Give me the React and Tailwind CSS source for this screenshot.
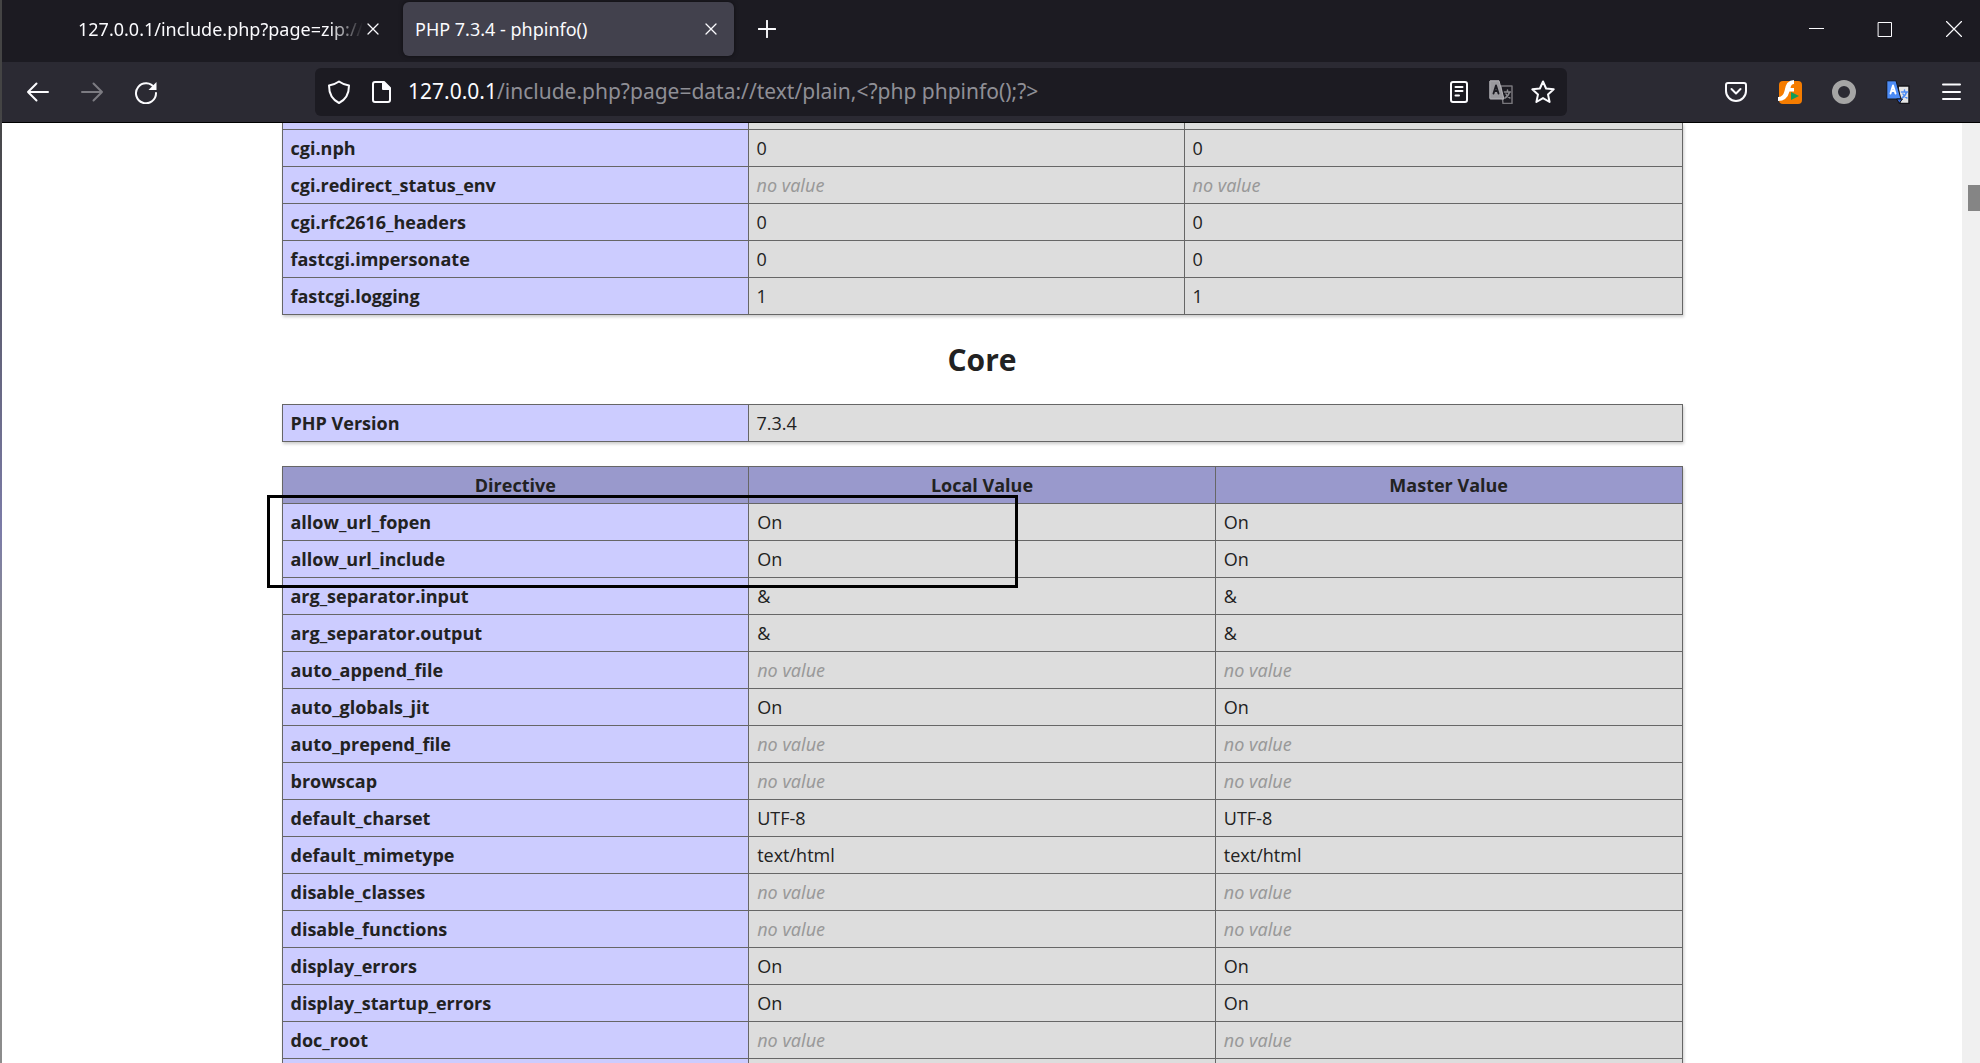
import clsx from "clsx";

const cgiRows = [
  ["cgi.nph", "0"],
  ["cgi.redirect_status_env", null],
  ["cgi.rfc2616_headers", "0"],
  ["fastcgi.impersonate", "0"],
  ["fastcgi.logging", "1"],
];

const coreRows = [
  ["allow_url_fopen", "On"],
  ["allow_url_include", "On"],
  ["arg_separator.input", "&"],
  ["arg_separator.output", "&"],
  ["auto_append_file", null],
  ["auto_globals_jit", "On"],
  ["auto_prepend_file", null],
  ["browscap", null],
  ["default_charset", "UTF-8"],
  ["default_mimetype", "text/html"],
  ["disable_classes", null],
  ["disable_functions", null],
  ["display_errors", "On"],
  ["display_startup_errors", "On"],
  ["doc_root", null],
];

const tableClass =
  "w-full table-fixed border-collapse text-lg leading-7 shadow-[1px_2px_3px_#ccc]";
const cell = "h-[37px] border border-[#666] px-2 align-middle";
const keyCell = "bg-[#ccccff] text-left font-bold";

function Icon({ className = "size-6", children, ...props }) {
  return (
    <svg
      viewBox="0 0 24 24"
      fill="none"
      stroke="currentColor"
      strokeWidth="2"
      strokeLinecap="round"
      strokeLinejoin="round"
      className={clsx("shrink-0", className)}
      aria-hidden="true"
      {...props}
    >
      {children}
    </svg>
  );
}

function CloseIcon() {
  return (
    <Icon className="size-3" strokeWidth="2.500">
      <path d="M2 2 22 22M22 2 2 22" />
    </Icon>
  );
}

function TranslateIcon({ muted }) {
  const front = muted ? "#9a999e" : "#4c8bf5";
  const letter = muted ? "#1c1b22" : "#fff";
  const page = muted ? "none" : "#e4e4e4";
  const line = muted ? "#8b8a8f" : "#4c8bf5";
  return (
    <Icon strokeWidth="1.500">
      <path d="M12 6h11v17.500H14z" fill={page} stroke={muted ? "#77767b" : "#15141a"} />
      <path d="M15.500 12h6M18.500 10v2M20.500 12q-1 4-4.500 6M17 14q1.500 3 4 4" stroke={line} />
      <path
        d="M1.500.800H10L15 19H1.500Q.800 19 .800 18V1.500Z"
        fill={front}
        stroke={muted ? "#b5b4b9" : "#15141a"}
        strokeWidth="1"
      />
      {!muted && (
        <path d="M11 19h5.500L13.500 23z" fill="#3367d6" stroke="#15141a" strokeWidth="1" />
      )}
      <path d="M4.500 13.500 7 5.500l2.500 8M5.300 11h3.400" stroke={letter} strokeWidth="1.900" />
    </Icon>
  );
}

function DirectiveRow({ name, value }) {
  const shown =
    value === null ? <i className="font-['Noto_Sans'] text-[#999]">no value</i> : value;

  return (
    <tr>
      <th scope="row" className={clsx(cell, keyCell)}>
        {name}
      </th>
      <td className={clsx(cell, "bg-[#ddd]")}>{shown}</td>
      <td className={clsx(cell, "bg-[#ddd]")}>{shown}</td>
    </tr>
  );
}

function TabStrip() {
  return (
    <div className="flex h-[62px] items-start bg-[#1c1b22] pt-0.5 text-lg">
      <div className="flex h-[54px] w-[401px] items-center pl-[76px] pr-6">
        <span className="min-w-0 flex-1 overflow-hidden whitespace-nowrap [mask-image:linear-gradient(to_right,#000_88%,transparent)]">
          127.0.0.1/include.php?page=zip://
        </span>
        <button aria-label="Close tab" className="ml-1">
          <CloseIcon />
        </button>
      </div>
      <div className="flex h-[54px] w-[331px] items-center justify-between rounded-md bg-[#42414d] pl-3 pr-[17px] shadow-[0_0_4px_rgba(0,0,0,0.5)]">
        <span>PHP 7.3.4 - phpinfo()</span>
        <button aria-label="Close tab">
          <CloseIcon />
        </button>
      </div>
      <button aria-label="New tab" className="ml-6 flex h-[54px] items-center">
        <Icon className="size-[18px]" strokeWidth="2.500">
          <path d="M12 1v22M1 12h22" />
        </Icon>
      </button>
      <div className="ml-auto flex h-[54px] items-center gap-[53px] pr-[18px]">
        <button aria-label="Minimize">
          <Icon className="size-4" viewBox="0 0 16 16" strokeWidth="1" strokeLinecap="butt">
            <path d="M1 7.500h15" />
          </Icon>
        </button>
        <button aria-label="Maximize">
          <Icon className="size-4" viewBox="0 0 16 16" strokeWidth="1">
            <rect x="1.500" y="1.500" width="13" height="14" />
          </Icon>
        </button>
        <button aria-label="Close window">
          <Icon className="size-4" viewBox="0 0 16 16" strokeWidth="1.200">
            <path d="m.5.500 15 15m0-15-15 15" />
          </Icon>
        </button>
      </div>
    </div>
  );
}

function NavBar() {
  return (
    <div className="flex h-[61px] items-center border-b border-black bg-[#2b2a33] pl-6 pr-4">
      <div className="flex items-center gap-[30px]">
        <button aria-label="Back">
          <Icon>
            <path d="M22 12H2M10.500 3.500 2 12l8.500 8.500" />
          </Icon>
        </button>
        <button aria-label="Forward" disabled className="text-[#7c7b82]">
          <Icon>
            <path d="M2 12h20M13.500 3.500 22 12l-8.500 8.500" />
          </Icon>
        </button>
        <button aria-label="Reload">
          <Icon>
            <path d="M20.500 8A10 10 0 1 0 22 13" />
            <path d="M22.500 2v8h-8z" fill="currentColor" stroke="none" />
          </Icon>
        </button>
      </div>

      <div className="ml-[157px] flex h-12 flex-1 items-center rounded-md bg-[#1c1b22] pl-3 pr-3">
        <Icon>
          <path d="M12 1.500c3 2.200 6 3.300 10 4 0 8-3 14-10 17.500C5 19.500 2 13.500 2 5.500c4-.7 7-1.800 10-4z" />
        </Icon>
        <Icon className="ml-[18px] size-6">
          <path d="M6 2h9l6 6v12q0 2-2 2H6q-2 0-2-2V4q0-2 2-2z" />
          <path d="M14 2v7h7z" fill="currentColor" />
        </Icon>
        <div className="ml-[15px] flex-1 whitespace-nowrap text-[21px] text-[#8f8f96]">
          <span className="text-[#fbfbfe]">127.0.0.1</span>
          /include.php?page=data://text/plain,&lt;?php phpinfo();?&gt;
        </div>
        <div className="flex items-center gap-[18px]">
          <button aria-label="Reader view">
            <Icon>
              <rect x="4" y="2" width="16" height="20" rx="2" />
              <path d="M8.500 7h7M8.500 11h7M8.500 15.500h3.500" />
            </Icon>
          </button>
          <button aria-label="Translate page">
            <TranslateIcon muted />
          </button>
          <button aria-label="Bookmark">
            <Icon>
              <path d="m12 1.500 3.100 7 7.600.8-5.700 5.100 1.600 7.600-6.600-3.900L5.400 22 7 14.400 1.300 9.300l7.600-.8z" />
            </Icon>
          </button>
        </div>
      </div>

      <div className="ml-[157px] flex items-center gap-[30px]">
        <button aria-label="Save to Pocket">
          <Icon>
            <path d="M4 3h16q2 0 2 2v6a10 10 0 0 1-20 0V5q0-2 2-2z" />
            <path d="m7.500 9 4.500 4.500L16.500 9" />
          </Icon>
        </button>
        <button aria-label="Flash player">
          <Icon stroke="none">
            <rect x="1" y="1" width="23" height="23" rx="4" fill="#f57c00" />
            <path
              d="M16 0v4q-3 0-3.500 4H16v3.500h-4.500Q9 21 0 21v-4q5 0 6.500-6Q8 0 16 0z"
              fill="#fff"
            />
            <path d="m13 12 8 4-8 4z" fill="#0f9d58" />
          </Icon>
        </button>
        <button aria-label="Proxy">
          <Icon stroke="#a5a5a5" strokeWidth="6">
            <circle cx="12" cy="12" r="9" />
          </Icon>
        </button>
        <button aria-label="Translate">
          <TranslateIcon />
        </button>
        <button aria-label="Application menu">
          <Icon>
            <path d="M3 4.500h17M3 12h17M3 19h17" />
          </Icon>
        </button>
      </div>
    </div>
  );
}

export default function App() {
  return (
    <div className="flex h-screen overflow-hidden bg-white font-['Open_Sans','Noto_Sans',sans-serif]">
      <div className="w-0.5 shrink-0 bg-linear-to-b from-[#444] from-10% via-[#7c7ca8] via-50% to-[#8c8c8c] to-60%" />
      <div className="flex min-w-0 flex-1 flex-col">
        <header className="shrink-0 font-['Noto_Sans',sans-serif] text-[#fbfbfe]">
          <TabStrip />
          <NavBar />
        </header>

        <div className="flex min-h-0 flex-1">
          <main className="flex-1 overflow-hidden text-[#222]">
            <div className="mx-auto w-[1401px]">
              <table className={tableClass}>
                <colgroup>
                  <col className="w-[466px]" />
                  <col className="w-[436px]" />
                  <col />
                </colgroup>
                <tbody>
                  <tr>
                    <td className="h-[6px] border border-t-0 border-[#666] bg-[#ccccff]" />
                    <td className="h-[6px] border border-t-0 border-[#666] bg-[#ddd]" />
                    <td className="h-[6px] border border-t-0 border-[#666] bg-[#ddd]" />
                  </tr>
                  {cgiRows.map(([name, value]) => (
                    <DirectiveRow key={name} name={name} value={value} />
                  ))}
                </tbody>
              </table>

              <h2 className="my-6 text-center text-3xl leading-[41px] font-bold">Core</h2>

              <table className={tableClass}>
                <colgroup>
                  <col className="w-[466px]" />
                  <col />
                </colgroup>
                <tbody>
                  <tr>
                    <th scope="row" className={clsx(cell, keyCell)}>
                      PHP Version
                    </th>
                    <td className={clsx(cell, "bg-[#ddd]")}>7.3.4</td>
                  </tr>
                </tbody>
              </table>

              <div className="relative mt-6">
                <table className={tableClass}>
                  <thead>
                    <tr className="bg-[#9999cc]">
                      <th className={clsx(cell, "font-bold")}>Directive</th>
                      <th className={clsx(cell, "font-bold")}>Local Value</th>
                      <th className={clsx(cell, "font-bold")}>Master Value</th>
                    </tr>
                  </thead>
                  <tbody>
                    {coreRows.map(([name, value]) => (
                      <DirectiveRow key={name} name={name} value={value} />
                    ))}
                    <tr>
                      <td className={clsx(cell, "bg-[#ccccff]")} />
                      <td className={clsx(cell, "bg-[#ddd]")} />
                      <td className={clsx(cell, "bg-[#ddd]")} />
                    </tr>
                  </tbody>
                </table>
                {/* highlight around allow_url_fopen / allow_url_include */}
                <div className="absolute top-[29px] -left-[15px] h-[93px] w-[751px] border-3 border-black" />
              </div>
            </div>
          </main>

          <div className="w-[18px] shrink-0 bg-[#f0f0f0] pt-[62px] pl-1.5">
            <div className="h-[26px] bg-[#858585]" />
          </div>
        </div>
      </div>
    </div>
  );
}
